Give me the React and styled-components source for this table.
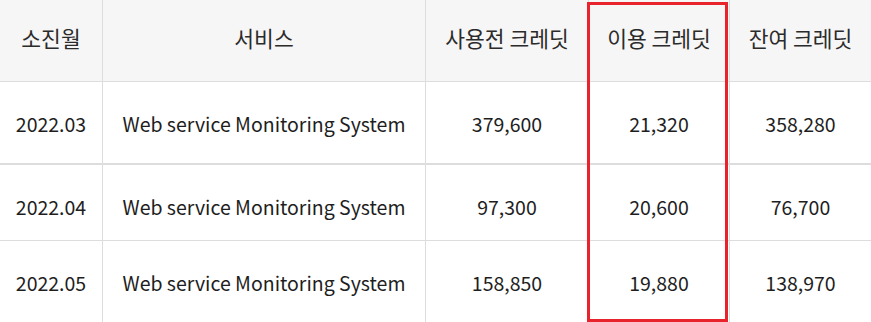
import React from "react";
import styled, { createGlobalStyle } from "styled-components";

const GlobalStyle = createGlobalStyle`
  html, body {
    margin: 0;
    padding: 0;
    background: #fff;
    overflow: hidden;
  }
  body {
    font-family: "Noto Sans CJK KR", "Noto Sans", sans-serif;
  }
`;

const Wrapper = styled.div`
  position: relative;
  width: 871px;
`;

const Grid = styled.div`
  display: grid;
  grid-template-columns: 103px 323px 163px 141px 1fr;
  grid-template-rows: 82px 83px 76px 82px;
`;

const Cell = styled.div`
  box-sizing: border-box;
  padding-top: ${(props) => (props.head ? "24px" : "28px")};
  border-right: ${(props) => (props.last ? "none" : "1px solid #dddddd")};
  border-bottom: ${(props) => props.bottom || "1px solid #dddddd"};
  background: ${(props) => (props.head ? "#f6f6f6" : "#fff")};
  color: ${(props) => (props.head ? "#2b2b2b" : "#1e1e1e")};
  font-size: ${(props) => (props.head ? "21.5px" : "19.5px")};
  line-height: 28px;
  text-align: center;
  white-space: nowrap;
`;

const Highlight = styled.div`
  position: absolute;
  left: 587px;
  top: 2px;
  width: 141px;
  height: 320px;
  box-sizing: border-box;
  border: 3px solid #e8232b;
  pointer-events: none;
`;

const headers = ["소진월", "서비스", "사용전 크레딧", "이용 크레딧", "잔여 크레딧"];

const rows = [
  { month: "2022.03", service: "Web service Monitoring System", before: "379,600", used: "21,320", left: "358,280", bottom: "2px solid #dddddd" },
  { month: "2022.04", service: "Web service Monitoring System", before: "97,300", used: "20,600", left: "76,700" },
  { month: "2022.05", service: "Web service Monitoring System", before: "158,850", used: "19,880", left: "138,970" },
];

const App = () => (
  <>
    <GlobalStyle />
    <Wrapper>
      <Grid>
        {headers.map((h, i) => (
          <Cell key={h} head last={i === headers.length - 1}>
            {h}
          </Cell>
        ))}
        {rows.map((r) =>
          [r.month, r.service, r.before, r.used, r.left].map((v, i) => (
            <Cell key={r.month + i} bottom={r.bottom} last={i === 4}>
              {v}
            </Cell>
          ))
        )}
      </Grid>
      <Highlight />
    </Wrapper>
  </>
);

export default App;
